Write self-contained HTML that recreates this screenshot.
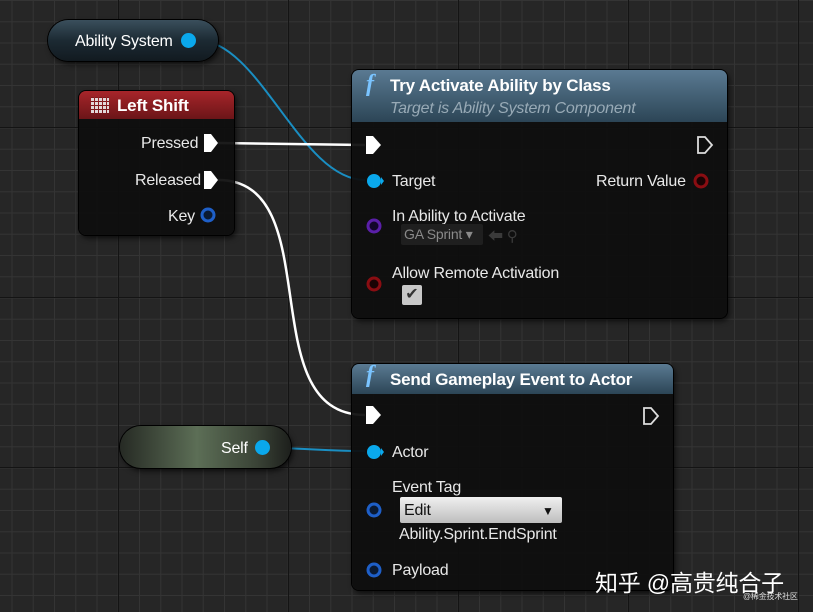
<!DOCTYPE html>
<html><head><meta charset="utf-8"><style>
*{margin:0;padding:0;box-sizing:border-box}
body{width:813px;height:612px;overflow:hidden;position:relative;font-family:"Liberation Sans","Noto Sans CJK SC",sans-serif;color:#e8e8e8;
background-color:#262626;
background-image:
linear-gradient(90deg,#141414 1px,transparent 1px),
linear-gradient(0deg,#141414 1px,transparent 1px),
linear-gradient(90deg,#343434 1px,transparent 1px),
linear-gradient(0deg,#343434 1px,transparent 1px);
background-size:170px 170px,170px 170px,21.25px 21.25px,21.25px 21.25px;
background-position:118px 0,0 298px,11.5px 0,0 1px;}
.node{position:absolute;background:rgba(14,14,14,.94);border-radius:7px;box-shadow:0 0 0 1px #000,2px 3px 6px rgba(0,0,0,.7)}
.hdr{position:absolute;left:0;right:0;top:0;border-radius:7px 7px 0 0}
.t{position:absolute;font-size:16px;white-space:nowrap;margin-top:2px;letter-spacing:-0.2px}
.b{font-weight:bold;font-size:17px;color:#fff}
.pill{position:absolute;border-radius:21px;box-shadow:0 0 0 1px #000,2px 3px 6px rgba(0,0,0,.7)}
.f{position:absolute;font-family:"Liberation Serif",serif;font-style:italic;font-weight:bold;font-size:24px;color:#7ac4ff}
</style></head><body>
<svg width="813" height="612" style="position:absolute;left:0;top:0" >
<path d="M197 40 C260 40,300 180,365 180" stroke="#1a8ec2" stroke-width="2" fill="none"/>
<path d="M218 143 L365 145" stroke="#fff" stroke-width="2.5" fill="none"/>
<path d="M218 180 C330 180,250 415,365 415" stroke="#fff" stroke-width="2.5" fill="none"/>
<path d="M268 448 C310 448,320 451,365 451" stroke="#1a8ec2" stroke-width="2" fill="none"/>
</svg>

<div class="pill" style="left:48px;top:20px;width:170px;height:41px;background:linear-gradient(#3a4f5c,#1c2a33 50%,#121a20)"></div>
<div class="t" style="left:75px;top:31px;color:#fff">Ability System</div>
<div style="position:absolute;left:181px;top:33px;width:15px;height:15px;border-radius:50%;background:#0aa8ec"></div>

<div class="pill" style="left:120px;top:426px;width:171px;height:42px;background:linear-gradient(90deg,#262a24,#5c6e56 45%,#3a4336 80%,#1d1f1c)"></div>
<div class="t" style="left:221px;top:438px;color:#fff">Self</div>
<div style="position:absolute;left:255px;top:440px;width:15px;height:15px;border-radius:50%;background:#0aa8ec"></div>

<!-- Left Shift -->
<div class="node" style="left:79px;top:91px;width:155px;height:144px">
<div class="hdr" style="height:28px;background:linear-gradient(#a7252a,#6b1518)"></div>
<div class="t b" style="left:38px;top:3px">Left Shift</div>
<div style="position:absolute;left:12px;top:6px;width:18px;height:16px;background:repeating-linear-gradient(0deg,#eee 0 3px,#7a1a1c 3px 4px),#eee;-webkit-mask:repeating-linear-gradient(90deg,#000 0 3px,transparent 3px 4px);opacity:.9"></div>
<div class="t" style="left:62px;top:42px">Pressed</div>
<div class="t" style="left:56px;top:79px">Released</div>
<div class="t" style="left:89px;top:115px">Key</div>
</div>
<svg width="813" height="612" style="position:absolute;left:0;top:0">
<path d="M204 134 h7 l7 9 l-7 9 h-7z" fill="#fff"/>
<path d="M204 171 h7 l7 9 l-7 9 h-7z" fill="#fff"/>
<circle cx="208" cy="215" r="6" fill="#0a1a33" stroke="#1e5fc8" stroke-width="3"/>
</svg>

<!-- Try Activate -->
<div class="node" style="left:352px;top:70px;width:375px;height:248px">
<div class="hdr" style="height:52px;background:linear-gradient(#5a7a92,#2c4556)"></div>
<div class="f" style="left:14px;top:1px">f</div>
<div class="t b" style="left:38px;top:4px">Try Activate Ability by Class</div>
<div class="t" style="left:38px;top:28px;font-style:italic;color:#98aab6;font-size:16px">Target is Ability System Component</div>
<div class="t" style="left:40px;top:101px">Target</div>
<div class="t" style="left:244px;top:101px">Return Value</div>
<div class="t" style="left:40px;top:136px">In Ability to Activate</div>
<div style="position:absolute;left:49px;top:154px;width:82px;height:21px;background:#1f1f1f;border-radius:2px"></div>
<div class="t" style="left:52px;top:154px;font-size:14px;color:#8a8a8a">GA Sprint ▾</div>
<div class="t" style="left:136px;top:153px;font-size:15px;color:#3a3a3a">⬅ ⚲</div>
<div class="t" style="left:40px;top:193px">Allow Remote Activation</div>
<div style="position:absolute;left:50px;top:215px;width:20px;height:20px;background:#c8c8c8;border-radius:2px;color:#333;font-size:16px;line-height:20px;text-align:center">✔</div>
</div>
<!-- Send Gameplay -->
<div class="node" style="left:352px;top:364px;width:321px;height:226px">
<div class="hdr" style="height:30px;background:linear-gradient(#5a7a92,#2c4556)"></div>
<div class="f" style="left:14px;top:-2px">f</div>
<div class="t b" style="left:38px;top:4px">Send Gameplay Event to Actor</div>
<div class="t" style="left:40px;top:78px">Actor</div>
<div class="t" style="left:40px;top:113px">Event Tag</div>
<div style="position:absolute;left:48px;top:133px;width:162px;height:26px;background:linear-gradient(#f0f0f0,#bdbdbd);border-radius:2px"></div>
<div class="t" style="left:52px;top:136px;color:#111">Edit</div>
<div class="t" style="left:190px;top:138px;color:#111;font-size:12px">▼</div>
<div class="t" style="left:47px;top:160px">Ability.Sprint.EndSprint</div>
<div class="t" style="left:40px;top:196px">Payload</div>
</div>
<svg width="813" height="612" style="position:absolute;left:0;top:0">
<path d="M366 136 h7 l8 9 l-8 9 h-7z" fill="#fff"/>
<path d="M698 137 h7 l7 8 l-7 8 h-7z" fill="none" stroke="#ddd" stroke-width="1.8"/>
<circle cx="374" cy="181" r="7" fill="#0aa8ec"/><path d="M381 177 l3 4 l-3 4z" fill="#0aa8ec"/>
<circle cx="701" cy="181" r="6" fill="#1a0304" stroke="#8a0d12" stroke-width="3"/>
<circle cx="374" cy="226" r="6" fill="#12062a" stroke="#5a1fa8" stroke-width="3"/>
<circle cx="374" cy="284" r="6" fill="#1a0304" stroke="#8a0d12" stroke-width="3"/>
<path d="M366 406 h7 l8 9 l-8 9 h-7z" fill="#fff"/>
<path d="M644 408 h7 l7 8 l-7 8 h-7z" fill="none" stroke="#ddd" stroke-width="1.8"/>
<circle cx="374" cy="452" r="7" fill="#0aa8ec"/><path d="M381 448 l3 4 l-3 4z" fill="#0aa8ec"/>
<circle cx="374" cy="510" r="6" fill="#0a1a33" stroke="#1e5fc8" stroke-width="3"/>
<circle cx="374" cy="570" r="6" fill="#0a1a33" stroke="#1e5fc8" stroke-width="3"/>
</svg>
<div class="t" style="left:595px;top:562px;font-size:23px;color:#fff">知乎 @高贵纯合子</div>
<div class="t" style="left:743px;top:589px;font-size:8px;color:#ddd">@稀金技术社区</div>
</body></html>
